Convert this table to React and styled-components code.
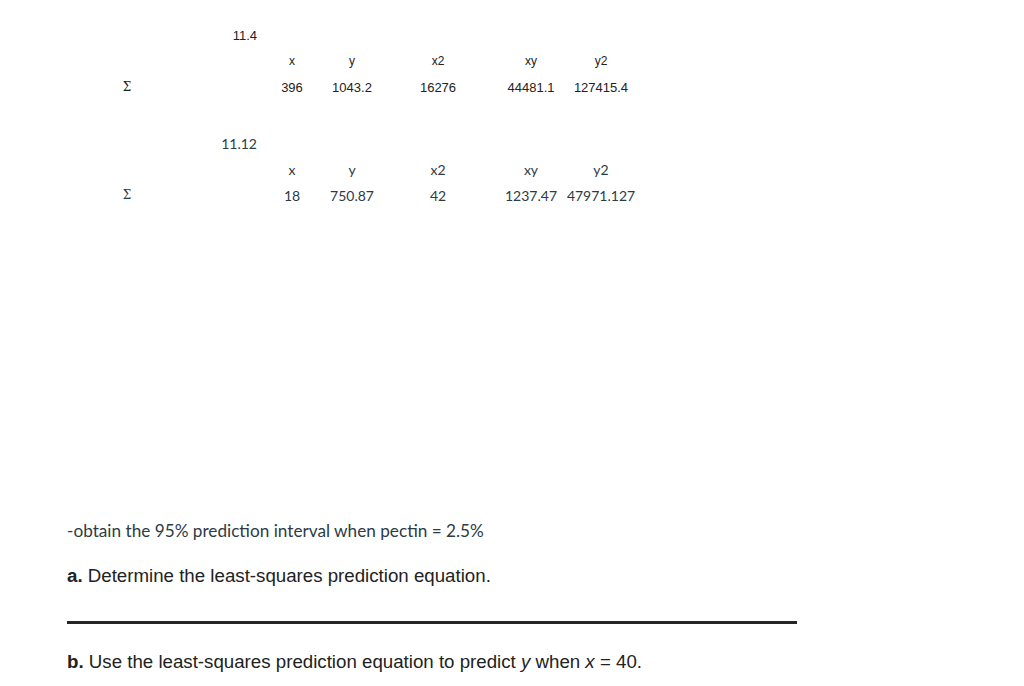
import React from "react";
import styled, { createGlobalStyle } from "styled-components";

const GlobalStyle = createGlobalStyle`
  html, body {
    margin: 0;
    padding: 0;
    background: #ffffff;
  }
`;

const Page = styled.div`
  width: 1024px;
  height: 686px;
  overflow: hidden;
  background: #fff;
`;

const SumsBlock = styled.div`
  padding-top: ${(p) => p.$top}px;
  padding-left: 97px;
`;

const SumsGrid = styled.div`
  display: grid;
  grid-template-columns: 60px 105px 60px 60px 112px 74px 66px;
  grid-auto-rows: 26px;
  font-family: ${(p) => (p.$lato ? "Lato, 'Open Sans', sans-serif" : "'Liberation Sans', Arial, sans-serif")};
  font-size: ${(p) => (p.$lato ? 14 : 13)}px;
  color: ${(p) => (p.$lato ? "#2d3b45" : "#222222")};
`;

const Cell = styled.div`
  display: flex;
  align-items: center;
  justify-content: ${(p) => (p.$right ? "flex-end" : "center")};
  padding-right: ${(p) => (p.$right ? "5px" : "0")};
  white-space: nowrap;
  font-size: ${(p) => (p.$small ? "12px" : "inherit")};
`;

const Sigma = styled(Cell)`
  font-family: "DejaVu Serif", "Liberation Serif", serif;
  font-size: 12px;
`;

const Questions = styled.div`
  padding-left: 67px;
  padding-top: 312px;
`;

const Note = styled.p`
  margin: 0;
  font-family: Lato, "Open Sans", sans-serif;
  font-size: 17.2px;
  line-height: 22px;
  color: #2d3b45;
`;

const Part = styled.p`
  margin: ${(p) => p.$mt}px 0 0;
  font-family: "Liberation Sans", Arial, sans-serif;
  font-size: 18.7px;
  line-height: 22px;
  color: #222222;
  b {
    font-weight: 700;
  }
`;

const AnswerLine = styled.div`
  margin-top: 34px;
  width: 730px;
  height: 3px;
  background: #262626;
`;

const cols = ["x", "y", "x2", "xy", "y2"];

const SumsTable = ({ title, values, lato, top }) => (
  <SumsBlock $top={top}>
    <SumsGrid $lato={lato}>
      <Cell />
      <Cell $right>{title}</Cell>
      <Cell /><Cell /><Cell /><Cell /><Cell />

      <Cell /><Cell />
      {cols.map((c) => (
        <Cell key={c} $small={!lato}>{c}</Cell>
      ))}

      <Sigma>Σ</Sigma>
      <Cell />
      {values.map((v, i) => (
        <Cell key={i}>{v}</Cell>
      ))}
    </SumsGrid>
  </SumsBlock>
);

export default function App() {
  return (
    <Page>
      <GlobalStyle />
      <SumsTable
        top={22}
        title="11.4"
        values={["396", "1043.2", "16276", "44481.1", "127415.4"]}
      />
      <SumsTable
        top={30}
        lato
        title="11.12"
        values={["18", "750.87", "42", "1237.47", "47971.127"]}
      />
      <Questions>
        <Note>-obtain the 95% prediction interval when pectin = 2.5%</Note>
        <Part $mt={23}>
          <b>a.</b> Determine the least-squares prediction equation.
        </Part>
        <AnswerLine />
        <Part $mt={27}>
          <b>b.</b> Use the least-squares prediction equation to predict <i>y</i> when <i>x</i> = 40.
        </Part>
      </Questions>
    </Page>
  );
}
